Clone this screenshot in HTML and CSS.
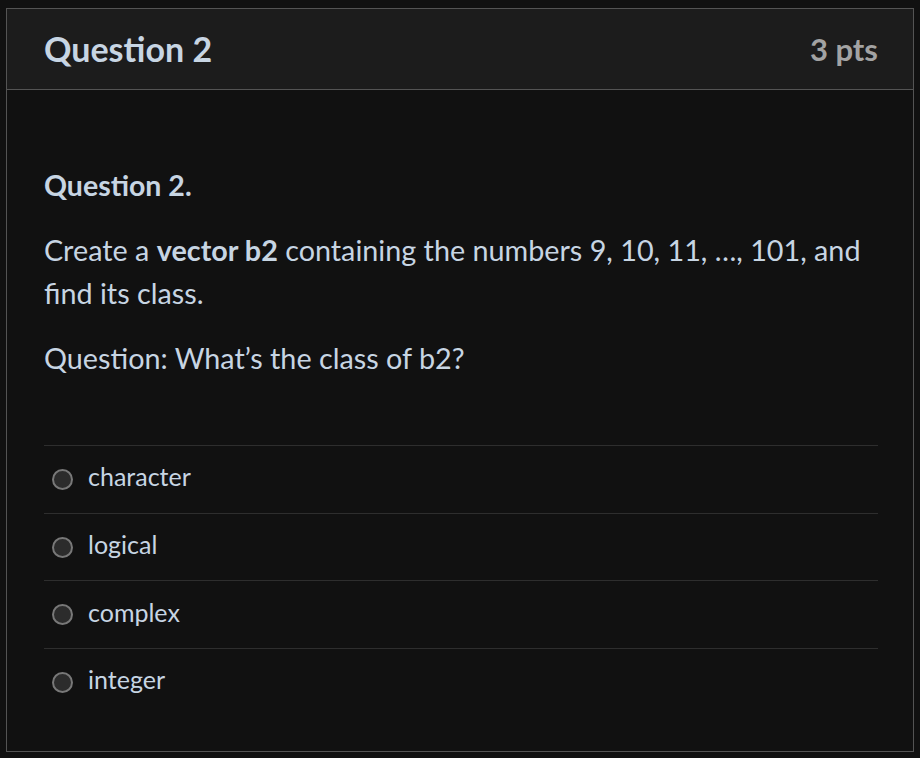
FILE: index.html
```html
<!DOCTYPE html>
<html>
<head>
<meta charset="utf-8">
<link rel="stylesheet" href="styles.css">
</head>
<body>
<div class="card">
  <div class="header">
    <h2 class="title">Question 2</h2>
    <span class="pts">3 pts</span>
  </div>
  <div class="content">
    <p class="qhead"><strong>Question 2.</strong></p>
    <p class="para">Create a <strong>vector b2</strong> containing the numbers 9, 10, 11, …, 101, and find its class.</p>
    <p class="para">Question: What’s the class of b2?</p>
    <div class="answers">
      <label class="answer"><span class="radio"></span><span class="alabel">character</span></label>
      <label class="answer"><span class="radio"></span><span class="alabel">logical</span></label>
      <label class="answer"><span class="radio"></span><span class="alabel">complex</span></label>
      <label class="answer"><span class="radio"></span><span class="alabel">integer</span></label>
    </div>
  </div>
</div>
</body>
</html>
```

FILE: styles.css
```css
html, body {
  margin: 0;
  background: #111111;
}
body {
  padding: 8px 6px 6px 6px;
  font-family: Lato, "Noto Sans", sans-serif;
  color: #c7d5e3;
}
.card {
  border: 1px solid #545454;
  background: #111111;
  height: 742px;
}
.header {
  height: 79px;
  padding: 0 35px 1px 37px;
  background: #1c1c1c;
  border-bottom: 1px solid #545454;
  display: flex;
  align-items: center;
  justify-content: space-between;
}
.title {
  margin: 0;
  font-size: 34px;
  font-weight: 700;
  color: #c7d5e3;
}
.pts {
  font-size: 31px;
  font-weight: 700;
  color: #a3a3a3;
}
.content {
  padding: 0 35px 0 37px;
}
.qhead {
  margin: 74px 0 0 0;
  font-size: 28.5px;
  line-height: 43px;
}
.para {
  margin: 22px 0 0 0;
  font-size: 28.75px;
  line-height: 43px;
}
.answers {
  margin-top: 65px;
}
.answer {
  display: flex;
  align-items: center;
  height: 66.7px;
  border-top: 1px solid #2e2e2e;
}
.radio {
  flex: none;
  width: 17px;
  height: 17px;
  border: 2px solid #787878;
  background: #2c2c2c;
  border-radius: 50%;
  margin-left: 8px;
  margin-right: 15px;
}
.alabel {
  font-size: 25px;
  line-height: 30px;
  margin-bottom: 6px;
}
```
